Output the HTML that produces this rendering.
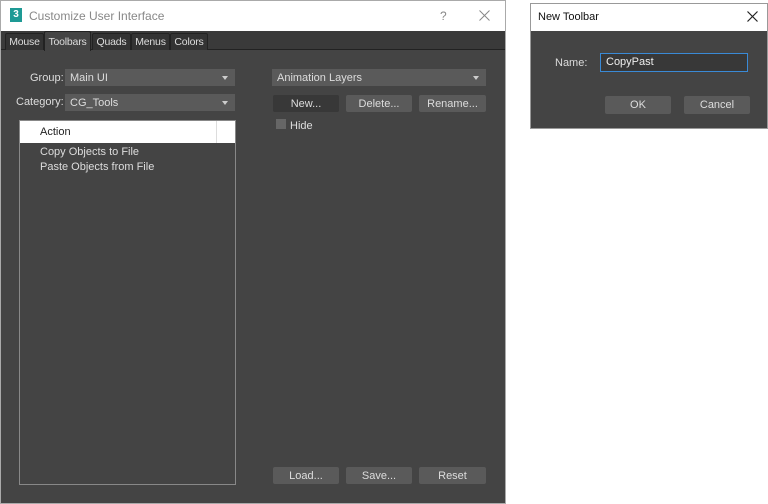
<!DOCTYPE html>
<html><head><style>
*{margin:0;padding:0;box-sizing:border-box}
body{width:768px;height:504px;background:#fff;position:relative;overflow:hidden;font-family:"Liberation Sans",sans-serif;font-size:11px;color:#ddd}
.a{position:absolute}
.btn{position:absolute;background:#5a5a5a;border-radius:2px;color:#ddd;text-align:center;line-height:18px;height:17px;font-size:11px}
.dd{position:absolute;background:#5a5a5a;height:17px;line-height:18px;padding-left:5px;color:#ddd}
.dd:after{content:"";position:absolute;right:7px;top:7px;border-left:3px solid transparent;border-right:3px solid transparent;border-top:4px solid #ccc}
.tab{position:absolute;top:33px;height:17px;line-height:17px;background:#333;border:1px solid #222;border-bottom:none;color:#ddd;text-align:center;font-size:10.5px;border-radius:2px 2px 0 0;letter-spacing:-0.2px}
</style></head><body>
<div class="a" style="left:0;top:0;width:506px;height:504px;border:1px solid #aaa;background:#444"></div>
<div class="a" style="left:1px;top:1px;width:504px;height:30px;background:#fff"></div>
<div class="a" style="left:10px;top:8px;width:12px;height:14px;background:#1e9a95;color:#fff;font-size:10px;font-weight:bold;text-align:center;line-height:14px">3</div>
<div class="a" style="left:29px;top:9px;color:#888;font-size:12px">Customize User Interface</div>
<div class="a" style="left:440px;top:9px;color:#888;font-size:12px">?</div>
<svg class="a" style="left:479px;top:10px" width="11" height="11"><path d="M0.5 0.5L10.5 10.5M10.5 0.5L0.5 10.5" stroke="#888" stroke-width="1"/></svg>
<div class="a" style="left:1px;top:31px;width:504px;height:19px;background:#3a3a3a;border-bottom:1px solid #222"></div>
<div class="tab" style="left:5px;width:39px">Mouse</div>
<div class="tab" style="left:44px;width:47px;top:31px;height:20px;background:#444;line-height:20px">Toolbars</div>
<div class="tab" style="left:92px;width:39px">Quads</div>
<div class="tab" style="left:131px;width:39px">Menus</div>
<div class="tab" style="left:170px;width:38px">Colors</div>
<div class="a" style="left:30px;top:72px">Group:</div>
<div class="dd" style="left:65px;top:69px;width:170px">Main UI</div>
<div class="a" style="left:16px;top:96px">Category:</div>
<div class="dd" style="left:65px;top:94px;width:170px">CG_Tools</div>
<div class="a" style="left:19px;top:120px;width:217px;height:365px;border:1px solid #888"></div>
<div class="a" style="left:20px;top:121px;width:196px;height:22px;background:#fff;color:#222;line-height:23px;padding-left:20px">Action</div>
<div class="a" style="left:216px;top:121px;width:19px;height:22px;background:#fff;border-left:1px solid #ddd"></div>
<div class="a" style="left:40px;top:146px">Copy Objects to File</div>
<div class="a" style="left:40px;top:161px">Paste Objects from File</div>
<div class="dd" style="left:272px;top:69px;width:214px">Animation Layers</div>
<div class="btn" style="left:273px;top:95px;width:66px;background:#383838">New...</div>
<div class="btn" style="left:346px;top:95px;width:66px">Delete...</div>
<div class="btn" style="left:419px;top:95px;width:67px">Rename...</div>
<div class="a" style="left:276px;top:119px;width:10px;height:10px;background:#666"></div>
<div class="a" style="left:290px;top:120px">Hide</div>
<div class="btn" style="left:273px;top:467px;width:66px">Load...</div>
<div class="btn" style="left:346px;top:467px;width:66px">Save...</div>
<div class="btn" style="left:419px;top:467px;width:67px">Reset</div>

<div class="a" style="left:530px;top:3px;width:238px;height:126px;border:1px solid #999;background:#444"></div>
<div class="a" style="left:531px;top:4px;width:236px;height:27px;background:#fff"></div>
<div class="a" style="left:538px;top:11px;color:#111;font-size:11px">New Toolbar</div>
<svg class="a" style="left:747px;top:11px" width="11" height="11"><path d="M0.5 0.5L10.5 10.5M10.5 0.5L0.5 10.5" stroke="#222" stroke-width="1.2"/></svg>
<div class="a" style="left:555px;top:57px">Name:</div>
<div class="a" style="left:600px;top:53px;width:148px;height:19px;border:1px solid #3a8ad6;background:#383838;padding-left:5px;line-height:16px;color:#eee">CopyPast</div>
<div class="btn" style="left:605px;top:96px;width:66px;height:18px;line-height:19px">OK</div>
<div class="btn" style="left:684px;top:96px;width:66px;height:18px;line-height:19px">Cancel</div>
</body></html>
